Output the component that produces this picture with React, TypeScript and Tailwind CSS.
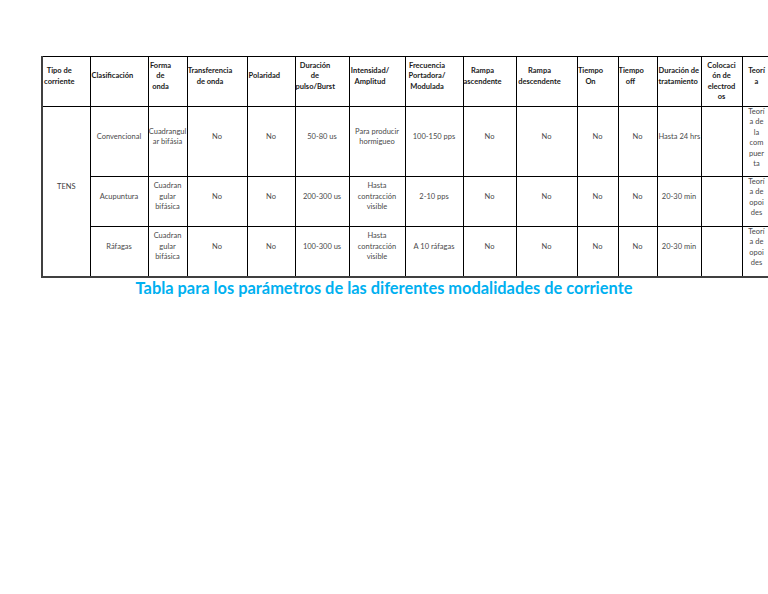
const cols = [48, 58, 39, 60, 48, 54, 56, 58, 53, 61, 41, 39, 44, 41, 29];

type Cell = { lines: string[]; align?: "left" | "center" | "shift" | "top" | "full" };

const header: Cell[] = [
  { lines: ["Tipo de", "corriente"], align: "shift" },
  { lines: ["Clasificación"], align: "left" },
  { lines: ["Forma", "de", "onda"], align: "shift" },
  { lines: ["Transferencia", "de onda"], align: "shift" },
  { lines: ["Polaridad"], align: "left" },
  { lines: ["Duración", "de", "pulso/Burst"], align: "shift" },
  { lines: ["Intensidad/", "Amplitud"], align: "shift" },
  { lines: ["Frecuencia", "Portadora/", "Modulada"], align: "shift" },
  { lines: ["Rampa", "ascendente"], align: "shift" },
  { lines: ["Rampa", "descendente"], align: "shift" },
  { lines: ["Tiempo", "On"], align: "shift" },
  { lines: ["Tiempo", "off"], align: "shift" },
  { lines: ["Duración de", "tratamiento"], align: "left" },
  { lines: ["Colocaci", "ón de", "electrod", "os"], align: "full" },
  { lines: ["Teorí", "a"] },
];

const rows: { h: string; cells: Cell[] }[] = [
  {
    h: "h-[70px]",
    cells: [
      { lines: ["Convencional"] },
      { lines: ["Cuadrangul", "ar bifásia"] },
      { lines: ["No"] },
      { lines: ["No"] },
      { lines: ["50-80 us"] },
      { lines: ["Para producir", "hormigueo"] },
      { lines: ["100-150 pps"] },
      { lines: ["No"] },
      { lines: ["No"] },
      { lines: ["No"] },
      { lines: ["No"] },
      { lines: ["Hasta 24 hrs"], align: "left" },
      { lines: [] },
      { lines: ["Teorí", "a de", "la", "com", "puer", "ta"], align: "top" },
    ],
  },
  {
    h: "h-[50px]",
    cells: [
      { lines: ["Acupuntura"] },
      { lines: ["Cuadran", "gular", "bifásica"] },
      { lines: ["No"] },
      { lines: ["No"] },
      { lines: ["200-300 us"] },
      { lines: ["Hasta", "contracción", "visible"] },
      { lines: ["2-10 pps"] },
      { lines: ["No"] },
      { lines: ["No"] },
      { lines: ["No"] },
      { lines: ["No"] },
      { lines: ["20-30 min"] },
      { lines: [] },
      { lines: ["Teorí", "a de", "opoi", "des"], align: "top" },
    ],
  },
  {
    h: "h-[50px]",
    cells: [
      { lines: ["Ráfagas"] },
      { lines: ["Cuadran", "gular", "bifásica"] },
      { lines: ["No"] },
      { lines: ["No"] },
      { lines: ["100-300 us"] },
      { lines: ["Hasta", "contracción", "visible"] },
      { lines: ["A 10 ráfagas"] },
      { lines: ["No"] },
      { lines: ["No"] },
      { lines: ["No"] },
      { lines: ["No"] },
      { lines: ["20-30 min"] },
      { lines: [] },
      { lines: ["Teorí", "a de", "opoi", "des"], align: "top" },
    ],
  },
];

function Lines({ lines }: { lines: string[] }) {
  return (
    <>
      {lines.map((l, i) => (
        <div key={i} className="whitespace-nowrap">
          {l}
        </div>
      ))}
    </>
  );
}

function alignClass(a: Cell["align"], head: boolean) {
  const pb = head ? "pb-[10px]" : "pb-[9px]";
  if (a === "left") return `text-left align-middle pl-[1px] ${pb}`;
  if (a === "shift") return `text-center align-middle pr-[14px] ${pb}`;
  if (a === "top") return "text-center align-top";
  if (a === "full") return "text-center align-middle";
  return `text-center align-middle ${pb}`;
}

export default function App() {
  return (
    <div className="w-[768px] h-[594px] overflow-hidden bg-white font-['Lato',sans-serif]">
      <table className="table-fixed border-collapse ml-[41px] mt-[56px] w-[729px] border-l-2 border-b-2 border-[#404040]">
        <colgroup>
          {cols.map((w, i) => (
            <col key={i} style={{ width: w }} />
          ))}
        </colgroup>
        <thead>
          <tr className="h-[50px]">
            {header.map((c, i) => (
              <th
                key={i}
                className={`border border-black p-0 text-[7.5px] leading-[10.4px] font-bold text-[#1a1a1a] overflow-visible ${alignClass(c.align, true)}`}
              >
                <Lines lines={c.lines} />
              </th>
            ))}
          </tr>
        </thead>
        <tbody>
          {rows.map((r, ri) => (
            <tr key={ri} className={r.h}>
              {ri === 0 && (
                <td
                  rowSpan={3}
                  className="border border-black p-0 pb-[9px] text-center align-middle text-[7.5px] leading-[10.4px] text-[#404040]"
                >
                  TENS
                </td>
              )}
              {r.cells.map((c, i) => (
                <td
                  key={i}
                  className={`border border-black p-0 text-[7.5px] leading-[10.4px] text-[#4a4a4a] overflow-visible ${alignClass(c.align, false)}`}
                >
                  <Lines lines={c.lines} />
                </td>
              ))}
            </tr>
          ))}
        </tbody>
      </table>
      <h1 className="text-center text-[#00b0f0] font-bold text-[16.4px] leading-[22px] mt-[-1px]">
        Tabla para los parámetros de las diferentes modalidades de corriente
      </h1>
    </div>
  );
}
